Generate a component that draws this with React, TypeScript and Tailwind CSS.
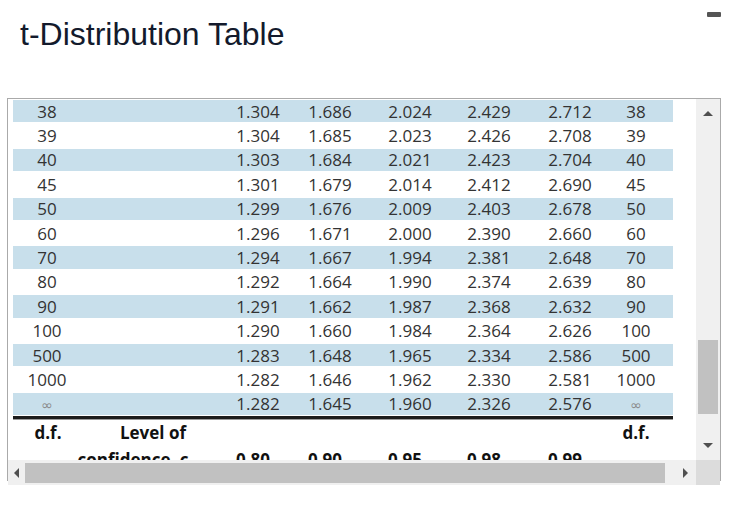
import React from "react";

const rows: [string, string, string, string, string, string][] = [
  ["38", "1.304", "1.686", "2.024", "2.429", "2.712"],
  ["39", "1.304", "1.685", "2.023", "2.426", "2.708"],
  ["40", "1.303", "1.684", "2.021", "2.423", "2.704"],
  ["45", "1.301", "1.679", "2.014", "2.412", "2.690"],
  ["50", "1.299", "1.676", "2.009", "2.403", "2.678"],
  ["60", "1.296", "1.671", "2.000", "2.390", "2.660"],
  ["70", "1.294", "1.667", "1.994", "2.381", "2.648"],
  ["80", "1.292", "1.664", "1.990", "2.374", "2.639"],
  ["90", "1.291", "1.662", "1.987", "2.368", "2.632"],
  ["100", "1.290", "1.660", "1.984", "2.364", "2.626"],
  ["500", "1.283", "1.648", "1.965", "2.334", "2.586"],
  ["1000", "1.282", "1.646", "1.962", "2.330", "2.581"],
  ["∞", "1.282", "1.645", "1.960", "2.326", "2.576"],
];

const COLS = "grid grid-cols-[68px_144px_66px_78px_82px_76px_86px_46px_14px]";

function DfCell({ v }: { v: string }) {
  if (v === "∞") return <span className="font-['DejaVu_Sans',sans-serif] text-[14px] text-[#8a8a8a]">∞</span>;
  return <>{v}</>;
}

function Arrow({ dir }: { dir: "up" | "down" | "left" | "right" }) {
  const pts = {
    up: "0,5 5,0 10,5",
    down: "0,0 10,0 5,5",
    left: "5,0 5,10 0,5",
    right: "0,0 0,10 5,5",
  }[dir];
  const vertical = dir === "up" || dir === "down";
  return (
    <svg width={vertical ? 10 : 5} height={vertical ? 5 : 10} viewBox={vertical ? "0 0 10 5" : "0 0 5 10"}>
      <polygon points={pts} fill="#505050" />
    </svg>
  );
}

export default function App() {
  return (
    <div className="h-[531px] w-[745px] bg-white font-['Liberation_Sans',Arial,sans-serif]">
      <div className="flex items-start justify-between">
        <h1 className="pl-[20px] pt-[16px] text-[32px] leading-[36px] text-[#131a2c]">t-Distribution Table</h1>
        <div className="mr-[24px] mt-[12px] h-[5px] w-[14px] rounded-[1px] bg-[#555]" />
      </div>

      <div className="ml-[7px] mt-[46px] grid h-[383px] w-[714px] grid-cols-[1fr_24px] grid-rows-[1fr_25px] border border-[#aaaaaa]">
        {/* visible part of the table */}
        <div className="overflow-hidden pl-[5px] font-['Open_Sans',sans-serif] text-[17px] text-[#333]">
          <div className="w-[660px]">
            {rows.map((r, i) => (
              <div
                key={r[0]}
                className={`${COLS} h-[24.4px] items-center border-y border-white leading-none ${
                  i % 2 === 0 ? "bg-[#c8dfeb]" : "bg-white"
                }`}
              >
                <div className="text-center">
                  <DfCell v={r[0]} />
                </div>
                <div />
                <div className="text-center">{r[1]}</div>
                <div className="text-center">{r[2]}</div>
                <div className="text-center">{r[3]}</div>
                <div className="text-center">{r[4]}</div>
                <div className="text-center">{r[5]}</div>
                <div className="text-center">
                  <DfCell v={r[0]} />
                </div>
                <div />
              </div>
            ))}
            <div className="border-t-[3px] border-[#1c1c1c]" />
            <div className="border-t border-[#9a9a9a]" />
            <div className={`${COLS} text-[17px] font-bold leading-[25px] text-[#111]`}>
              <div className="pl-[2px] text-center">d.f.</div>
              <div className="text-center">Level of</div>
              <div />
              <div />
              <div />
              <div />
              <div />
              <div className="text-center">d.f.</div>
              <div />
              <div />
              <div className="-ml-[40px] pt-[2px] text-center">confidence, c</div>
              <div className="pr-[10px] pt-[2px] text-center">0.80</div>
              <div className="pr-[10px] pt-[2px] text-center">0.90</div>
              <div className="pr-[10px] pt-[2px] text-center">0.95</div>
              <div className="pr-[10px] pt-[2px] text-center">0.98</div>
              <div className="pr-[10px] pt-[2px] text-center">0.99</div>
              <div />
              <div />
            </div>
          </div>
        </div>

        {/* vertical scrollbar */}
        <div className="flex flex-col items-center bg-[#f0f0f0]">
          <div className="flex h-[28px] w-full items-center justify-center">
            <Arrow dir="up" />
          </div>
          <div className="flex w-full flex-1 flex-col px-[2px] pt-[213px] pb-[16px]">
            <div className="h-[74px] w-full bg-[#c1c1c1]" />
          </div>
          <div className="flex h-[30px] w-full items-center justify-center">
            <Arrow dir="down" />
          </div>
        </div>

        {/* horizontal scrollbar */}
        <div className="flex items-center bg-[#f0f0f0]">
          <div className="flex h-full w-[17px] items-center justify-center">
            <Arrow dir="left" />
          </div>
          <div className="h-[20px] w-[640px] bg-[#c1c1c1]" />
          <div className="flex h-full flex-1 items-center justify-center pl-[10px]">
            <Arrow dir="right" />
          </div>
        </div>
        <div className="bg-[#dcdcdc]" />
      </div>
    </div>
  );
}
